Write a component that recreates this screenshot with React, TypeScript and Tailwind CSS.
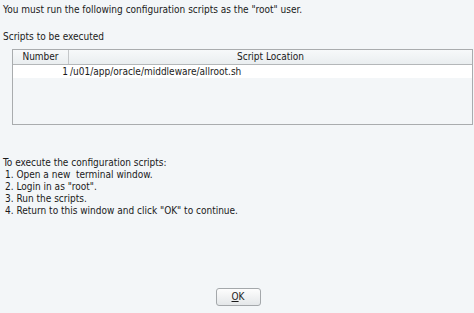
export default function App() {
  const steps = [
    'Open a new  terminal window.',
    'Login in as "root".',
    'Run the scripts.',
    'Return to this window and click "OK" to continue.',
  ];

  return (
    <div
      className="w-[474px] h-[313px] bg-[#f3f6f8] text-[#1a1a1a] text-[10px] leading-[12px] flex flex-col overflow-hidden"
      style={{ fontFamily: '"DejaVu Sans Condensed", "DejaVu Sans", sans-serif' }}
    >
      <p className="pl-[3px] pt-[4px]">You must run the following configuration scripts as the "root" user.</p>

      <p className="pl-[3px] mt-[15px]">Scripts to be executed</p>

      {/* scripts table */}
      <div className="ml-[12px] mr-[1px] mt-[6px] h-[76px] border border-[#a9acae] bg-[#f3f6f8] flex flex-col">
        <div className="flex h-[15px] border-b border-[#b4b7b9] bg-gradient-to-b from-[#f7f9fa] to-[#eaeef0]">
          <div className="w-[56px] border-r border-[#c4c7c9] flex items-center justify-center">Number</div>
          <div className="flex-1 flex items-center justify-center">Script Location</div>
        </div>
        <div className="flex h-[13px] bg-white items-center">
          <div className="w-[56px] text-right pr-[1px]">1</div>
          <div className="pl-[1px]">/u01/app/oracle/middleware/allroot.sh</div>
        </div>
      </div>

      <div className="pl-[3px] mt-[32px]">
        <p>To execute the configuration scripts:</p>
        <ol>
          {steps.map((s, i) => (
            <li key={i} className="pl-[2px] whitespace-pre">
              {i + 1}. {s}
            </li>
          ))}
        </ol>
      </div>

      <div className="flex-1" />

      <div className="flex justify-center pb-[7px] pl-[2px]">
        <button className="w-[45px] h-[18px] rounded-[3px] border border-[#a4a8ab] bg-gradient-to-b from-[#fdfdfd] to-[#e4e7e9] text-[10px] leading-none">
          <span className="underline">O</span>K
        </button>
      </div>
    </div>
  );
}
